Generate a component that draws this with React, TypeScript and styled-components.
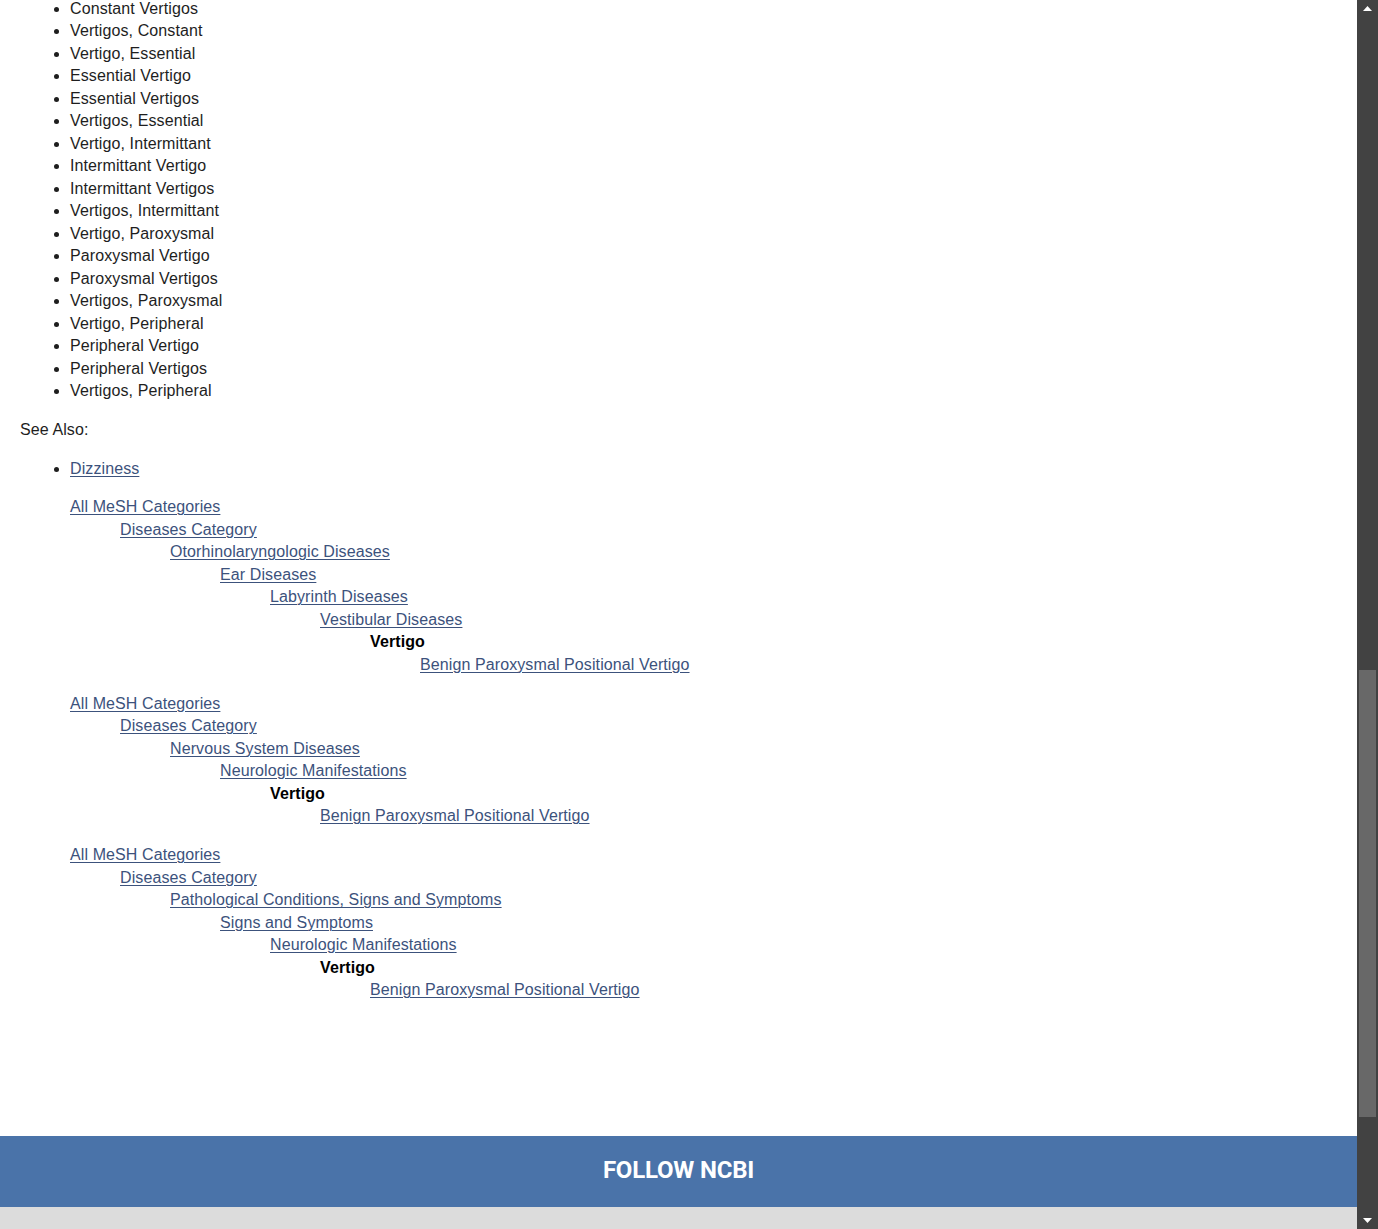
import React from "react";
import styled, { createGlobalStyle } from "styled-components";

const GlobalStyle = createGlobalStyle`
  html, body {
    margin: 0;
    padding: 0;
    background: #fff;
  }
  body {
    font-family: "Liberation Sans", Arial, sans-serif;
    font-size: 16px;
    letter-spacing: 0.1px;
    color: #1e1e1e;
  }
`;

const Screen = styled.div`
  display: flex;
  height: 1229px;
  overflow: hidden;
`;

const Page = styled.div`
  flex: 1;
  display: flex;
  flex-direction: column;
  min-width: 0;
`;

const Content = styled.main`
  /* scrolled a little past the top of the entry list */
  margin-top: -2.5px;
  padding: 0 20px;
  line-height: 22.5px;
`;

const TermList = styled.ul`
  margin: 0 0 16px;
  padding-left: 50px;
  list-style: disc;
`;

const Label = styled.p`
  margin: 16px 0 16.5px;
`;

const Link = styled.a`
  color: #3c527c;
  text-decoration: underline;
  text-underline-offset: 2px;
  text-decoration-thickness: 1px;
`;

const Tree = styled.ul`
  margin: 16px 0 16.5px;
  padding-left: 50px;
  list-style: none;
`;

const TreeNode = styled.li<{ $level: number; $current?: boolean }>`
  padding-left: ${(p) => p.$level * 50}px;
  font-weight: ${(p) => (p.$current ? 700 : 400)};
  color: ${(p) => (p.$current ? "#000" : "inherit")};
`;

const Footer = styled.footer`
  margin-top: auto;
  height: 71px;
  padding-bottom: 3px;
  box-sizing: border-box;
  background: #4a73a9;
  display: flex;
  align-items: center;
  justify-content: center;
`;

const FooterTitle = styled.h2`
  margin: 0;
  font-family: Roboto, "Liberation Sans", sans-serif;
  font-weight: 700;
  font-size: 24px;
  letter-spacing: -0.2px;
  color: #fff;
`;

const FooterBase = styled.div`
  height: 22px;
  background: #dcdcdc;
`;

const ScrollTrack = styled.div`
  width: 21px;
  flex: none;
  background: #424242;
  display: flex;
  flex-direction: column;
  align-items: center;
`;

const ScrollArrow = styled.div`
  height: 17px;
  width: 100%;
  display: flex;
  align-items: center;
  justify-content: center;
`;

const ScrollThumb = styled.div`
  width: 17px;
  height: 447px;
  margin-top: auto;
  margin-bottom: 95px;
  background: #686868;
`;

const entryTerms = [
  "Constant Vertigos",
  "Vertigos, Constant",
  "Vertigo, Essential",
  "Essential Vertigo",
  "Essential Vertigos",
  "Vertigos, Essential",
  "Vertigo, Intermittant",
  "Intermittant Vertigo",
  "Intermittant Vertigos",
  "Vertigos, Intermittant",
  "Vertigo, Paroxysmal",
  "Paroxysmal Vertigo",
  "Paroxysmal Vertigos",
  "Vertigos, Paroxysmal",
  "Vertigo, Peripheral",
  "Peripheral Vertigo",
  "Peripheral Vertigos",
  "Vertigos, Peripheral",
];

const treePaths: string[][] = [
  [
    "All MeSH Categories",
    "Diseases Category",
    "Otorhinolaryngologic Diseases",
    "Ear Diseases",
    "Labyrinth Diseases",
    "Vestibular Diseases",
  ],
  [
    "All MeSH Categories",
    "Diseases Category",
    "Nervous System Diseases",
    "Neurologic Manifestations",
  ],
  [
    "All MeSH Categories",
    "Diseases Category",
    "Pathological Conditions, Signs and Symptoms",
    "Signs and Symptoms",
    "Neurologic Manifestations",
  ],
];

const Arrow = ({ up }: { up?: boolean }) => (
  <svg width="9" height="5" viewBox="0 0 9 5">
    <path d={up ? "M0 5 L4.5 0 L9 5 Z" : "M0 0 L4.5 5 L9 0 Z"} fill="#fff" />
  </svg>
);

export default function App() {
  return (
    <>
      <GlobalStyle />
      <Screen>
        <Page>
          <Content>
            <TermList>
              {entryTerms.map((t) => (
                <li key={t}>{t}</li>
              ))}
            </TermList>

            <Label>See Also:</Label>
            <TermList>
              <li>
                <Link href="#">Dizziness</Link>
              </li>
            </TermList>

            {treePaths.map((path, i) => (
              <Tree key={i}>
                {path.map((name, level) => (
                  <TreeNode key={level} $level={level}>
                    <Link href="#">{name}</Link>
                  </TreeNode>
                ))}
                <TreeNode $level={path.length} $current>
                  Vertigo
                </TreeNode>
                <TreeNode $level={path.length + 1}>
                  <Link href="#">Benign Paroxysmal Positional Vertigo</Link>
                </TreeNode>
              </Tree>
            ))}
          </Content>

          <Footer>
            <FooterTitle>FOLLOW NCBI</FooterTitle>
          </Footer>
          <FooterBase />
        </Page>

        <ScrollTrack>
          <ScrollArrow>
            <Arrow up />
          </ScrollArrow>
          <ScrollThumb />
          <ScrollArrow>
            <Arrow />
          </ScrollArrow>
        </ScrollTrack>
      </Screen>
    </>
  );
}
